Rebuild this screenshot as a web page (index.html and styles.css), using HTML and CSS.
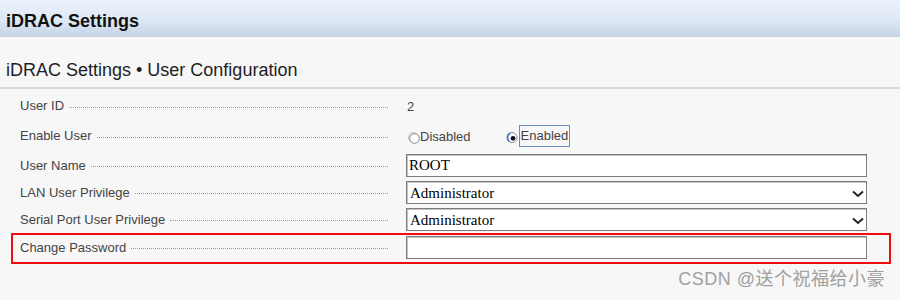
FILE: index.html
```html
<!DOCTYPE html>
<html lang="en">
<head>
<meta charset="UTF-8">
<meta name="viewport" content="width=device-width, initial-scale=1.0">
<title>iDRAC Settings - User Configuration</title>
<link rel="stylesheet" href="styles.css">
</head>
<body>
<div class="header">
    <h1>iDRAC Settings</h1>
</div>
<div class="page-title">
    <h2>iDRAC Settings • User Configuration</h2>
</div>
<form class="fields" id="userConfigForm">
    <div class="field field-id">
        <div class="label"><span>User ID</span><i class="leader"></i></div>
        <div class="value">2</div>
    </div>
    <div class="field field-enable">
        <div class="label"><span>Enable User</span><i class="leader"></i></div>
        <div class="radios">
            <label class="radio">
                <svg width="12" height="13" viewBox="0 0 12 13">
                    <circle cx="5.5" cy="6.5" r="4.8" fill="none" stroke="#b4b4b4" stroke-width="1"/>
                    <circle cx="6.5" cy="7.5" r="4.8" fill="#fff" stroke="#8a8a8a" stroke-width="1"/>
                </svg>
                <span>Disabled</span>
            </label>
            <label class="radio radio-on">
                <svg width="14" height="13" viewBox="0 0 14 13">
                    <circle cx="7" cy="6.5" r="5" fill="#fff" stroke="#8a8a8a" stroke-width="1"/>
                    <path d="M4.2 10.3 A5 5 0 0 1 5.2 2.2" fill="none" stroke="#3b6fd6" stroke-width="1.6"/>
                    <circle cx="8" cy="7.3" r="2.4" fill="#111"/>
                </svg>
                <span class="focus">Enabled</span>
            </label>
        </div>
    </div>
    <div class="field">
        <div class="label"><span>User Name</span><i class="leader"></i></div>
        <input class="input" type="text" name="userName" value="ROOT">
    </div>
    <div class="field">
        <div class="label"><span>LAN User Privilege</span><i class="leader"></i></div>
        <div class="select-wrap">
            <select class="input select" name="lanPrivilege">
                <option>Administrator</option>
                <option>Operator</option>
                <option>User</option>
                <option>No Access</option>
            </select>
            <svg class="chevron" width="12" height="8" viewBox="0 0 12 8"><path d="M1 1.5 L6 6 L11 1.5" fill="none" stroke="#222" stroke-width="2"/></svg>
        </div>
    </div>
    <div class="field">
        <div class="label"><span>Serial Port User Privilege</span><i class="leader"></i></div>
        <div class="select-wrap">
            <select class="input select" name="serialPrivilege">
                <option>Administrator</option>
                <option>Operator</option>
                <option>User</option>
                <option>No Access</option>
            </select>
            <svg class="chevron" width="12" height="8" viewBox="0 0 12 8"><path d="M1 1.5 L6 6 L11 1.5" fill="none" stroke="#222" stroke-width="2"/></svg>
        </div>
    </div>
    <div class="field field-highlight">
        <div class="label"><span>Change Password</span><i class="leader"></i></div>
        <input class="input" type="password" name="password">
    </div>
</form>
<div class="watermark">CSDN @送个祝福给小豪</div>
</body>
</html>
```

FILE: styles.css
```css
body {
    margin: 0;
    background-color: #f7f7f7;
    font-family: "Liberation Sans", Arial, sans-serif;
    color: #444;
}
.header {
    height: 36px;
    padding-left: 6px;
    border-bottom: 1px solid #cdd2d8;
    background: linear-gradient(#e9f1fb, #dfe9f5 55%, #c5d4e7);
}
.header h1 {
    margin: 0;
    padding-top: 11px;
    font-size: 18px;
    line-height: 20px;
    font-weight: bold;
    color: #111;
}
.page-title {
    height: 50px;
    padding-left: 6px;
    border-bottom: 2px solid #dadada;
}
.page-title h2 {
    margin: 0;
    padding-top: 23px;
    font-size: 18px;
    line-height: 20px;
    font-weight: normal;
    color: #1e1e1e;
}
.fields {
    margin: 0;
    padding: 3px 0 0 11px;
}
.field {
    width: 880px;
    height: 27px;
    box-sizing: border-box;
    padding-left: 9px;
    display: grid;
    grid-template-columns: 368px 461px;
    column-gap: 18px;
    align-items: center;
}
.field-id {
    height: 28px;
}
.field-enable {
    height: 32px;
}
.field-highlight {
    height: 31px;
    padding-left: 7px;
    padding-top: 1px;
    border: 2px solid #f20d0d;
    align-items: start;
}
.field-highlight .label {
    height: 23px;
}
.label {
    display: flex;
    align-items: center;
    font-size: 13px;
    line-height: 16px;
    color: #444;
}
.leader {
    flex: 1;
    height: 0;
    margin: 2px 0 0 5px;
    border-top: 1px dotted #9a9a9a;
}
.value {
    padding-left: 1px;
    font-size: 13px;
    color: #444;
}
.radios {
    display: flex;
    align-items: center;
    font-size: 13px;
    color: #444;
}
.radio {
    display: flex;
    align-items: center;
}
.radio svg {
    margin-top: 3px;
}
.radios .radio:first-child {
    margin-left: 2px;
}
.radio-on {
    margin-left: 34px;
}
.radio-on .focus {
    padding: 3px 1px;
    line-height: 14px;
    border: 1px solid #6b8ec6;
}
.input {
    display: block;
    width: 461px;
    height: 23px;
    margin: 0;
    box-sizing: border-box;
    padding: 0 2px;
    border: 1px solid #7c7c7c;
    border-radius: 0;
    box-shadow: inset 1px 1px 0 #c4c4c4;
    background-color: #fff;
    font-family: "Liberation Serif", "Times New Roman", serif;
    font-size: 15px;
    color: #000;
    outline: none;
}
.select-wrap {
    position: relative;
    width: 461px;
}
.select {
    appearance: none;
    -webkit-appearance: none;
    padding-left: 3px;
}
.chevron {
    position: absolute;
    right: 3px;
    top: 50%;
    margin-top: -3px;
    pointer-events: none;
}
.watermark {
    margin-top: 5px;
    padding-right: 15px;
    text-align: right;
    font-family: "Liberation Sans", "Noto Sans CJK SC", sans-serif;
    font-size: 18px;
    line-height: 21px;
    letter-spacing: 0.5px;
    color: #a0a0a0;
}
```
